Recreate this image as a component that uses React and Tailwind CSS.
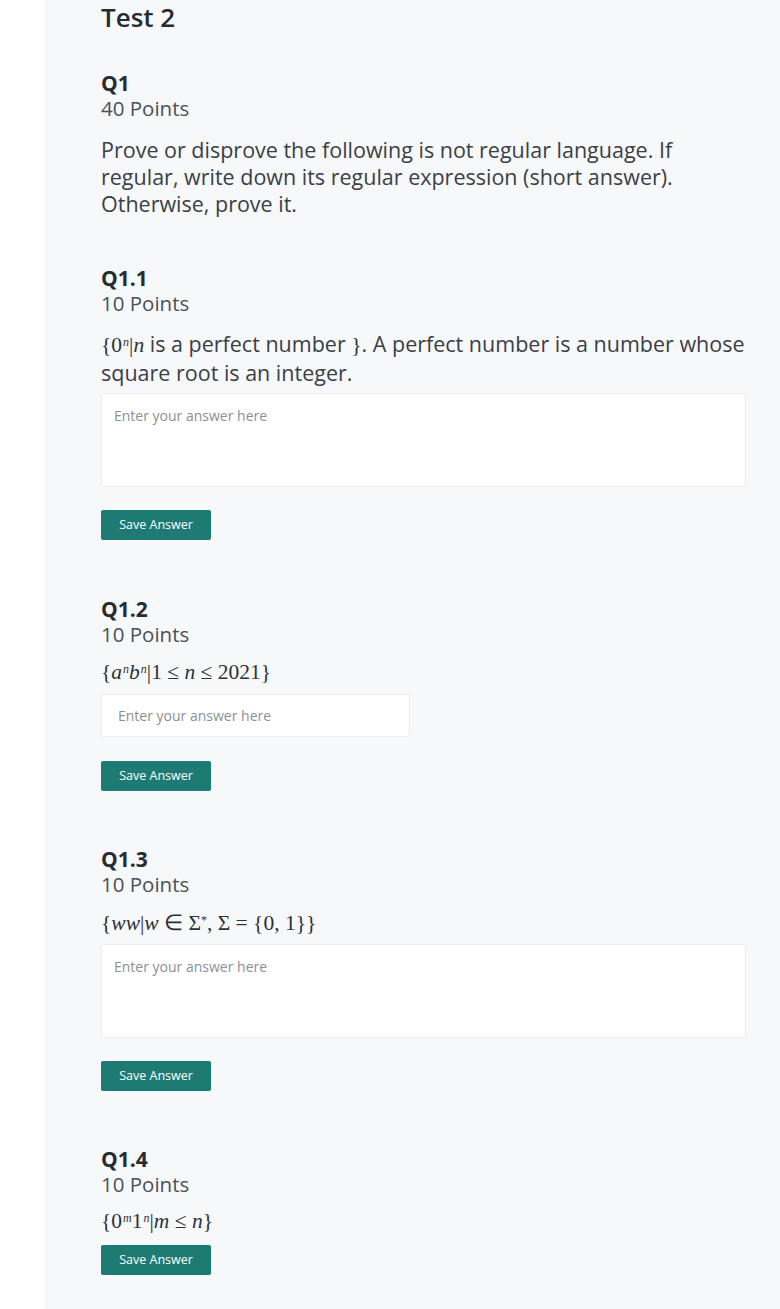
import React from 'react';

function Heading({ id, points }) {
  return (
    <div className="flex flex-col">
      <span className="text-[21px] leading-[25px] font-bold text-[#262c31]">{id}</span>
      <span className="text-[20.5px] leading-[25px] text-[#4a5157]">{points}</span>
    </div>
  );
}

function SaveButton({ className = '' }) {
  return (
    <button className={`w-[110px] h-[30px] bg-[#1e7b74] text-white text-[12.5px] rounded-[2px] ${className}`}>
      Save Answer
    </button>
  );
}

function Math({ children }) {
  return (
    <span className="font-['Liberation_Serif',serif] text-[21.5px] text-[#2c3136]">{children}</span>
  );
}

function Sup({ children }) {
  return <sup className="text-[12px] leading-none italic pl-[1px]">{children}</sup>;
}

function AnswerBox({ className = '' }) {
  return (
    <div className={`h-[94px] bg-white border border-[#ebedef] rounded-[2px] px-[12px] pt-[9px] ${className}`}>
      <span className="text-[14px] text-[#8a9095]">Enter your answer here</span>
    </div>
  );
}

export default function App() {
  return (
    <div className="flex min-h-[1309px] font-['Open_Sans',sans-serif]">
      <div className="w-[45px] shrink-0 bg-white" />
      <div className="flex-1 bg-[#f7f8fa] pl-[56px] pr-[34px] pt-[1px] text-[#33393e]">
        <h1 className="text-[26px] leading-[32px] font-semibold text-[#262c31]">Test 2</h1>

        <div className="mt-[38px]">
          <Heading id="Q1" points="40 Points" />
          <p className="mt-[15px] text-[21.5px] leading-[27px] text-[#3a4045]">
            Prove or disprove the following is not regular language. If regular, write down its regular expression (short answer). Otherwise, prove it.
          </p>
        </div>

        <div className="mt-[49px]">
          <Heading id="Q1.1" points="10 Points" />
          <p className="mt-[14px] text-[21.5px] leading-[27px] text-[#3a4045]">
            <Math>{'{'}0<Sup>n</Sup>|<i>n</i></Math> is a perfect number <Math>{'}'}</Math>. A perfect number is a number whose square root is an integer.
          </p>
          <AnswerBox className="mt-[7px]" />
          <SaveButton className="mt-[23px]" />
        </div>

        <div className="mt-[57px]">
          <Heading id="Q1.2" points="10 Points" />
          <div className="mt-[12px] leading-[27px]">
            <Math>{'{'}<i>a</i><Sup>n</Sup><i>b</i><Sup>n</Sup>|1 ≤ <i>n</i> ≤ 2021{'}'}</Math>
          </div>
          <div className="mt-[7px] w-[309px] h-[43px] bg-white border border-[#ebedef] rounded-[2px] px-[16px] flex items-center">
            <span className="text-[14px] text-[#8a9095]">Enter your answer here</span>
          </div>
          <SaveButton className="mt-[24px]" />
        </div>

        <div className="mt-[56px]">
          <Heading id="Q1.3" points="10 Points" />
          <div className="mt-[13px] leading-[27px]">
            <Math>{'{'}<i>ww</i>|<i>w</i> ∈ Σ<sup className="text-[12px] leading-none">*</sup>, Σ = {'{'}0, 1{'}'}{'}'}</Math>
          </div>
          <AnswerBox className="mt-[6px]" />
          <SaveButton className="mt-[23px]" />
        </div>

        <div className="mt-[56px]">
          <Heading id="Q1.4" points="10 Points" />
          <div className="mt-[11px] leading-[27px]">
            <Math>{'{'}0<Sup>m</Sup>1<Sup>n</Sup>|<i>m</i> ≤ <i>n</i>{'}'}</Math>
          </div>
          <SaveButton className="mt-[9px]" />
        </div>
      </div>
    </div>
  );
}
